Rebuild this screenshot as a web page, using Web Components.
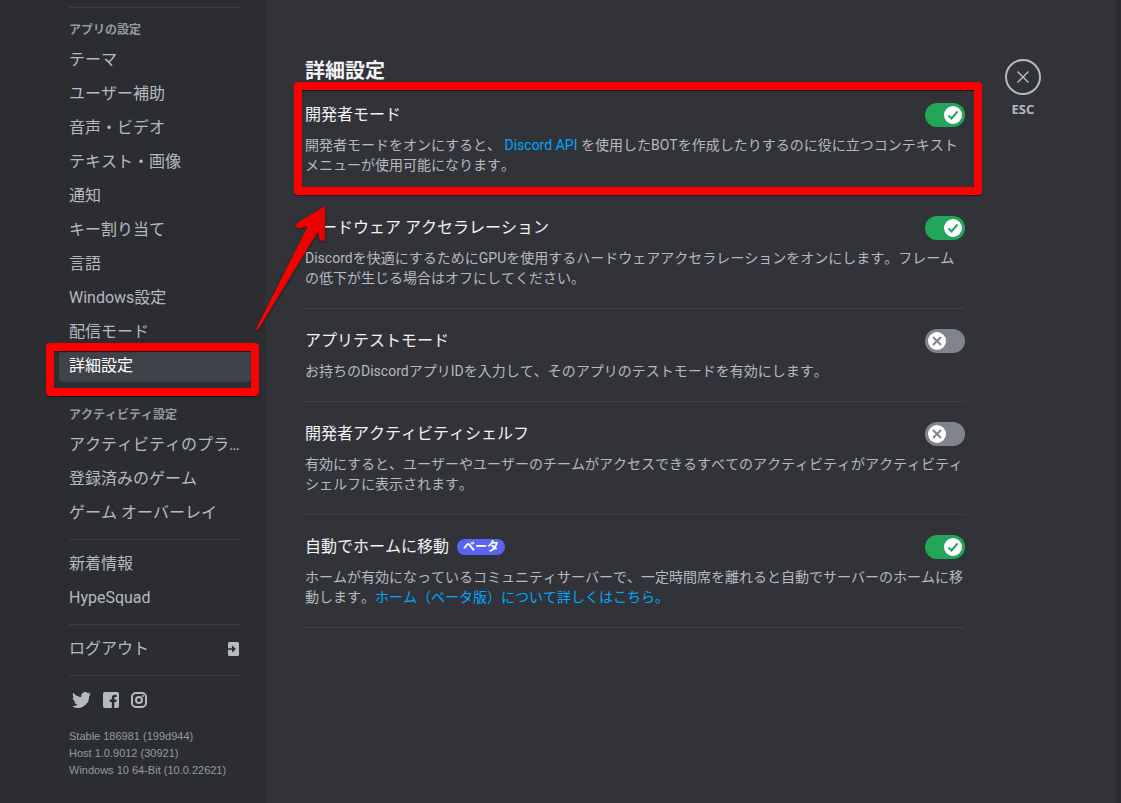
<!DOCTYPE html>
<html lang="ja">
<head>
<meta charset="utf-8">
<title>詳細設定</title>
<style>
  body { margin: 0; background: #313338; font-family: Roboto, "Noto Sans CJK JP", sans-serif; font-kerning: none; }
</style>
</head>
<body>
<settings-page></settings-page>

<script>
const define = (name, html, setup) => {
  const template = document.createElement('template');
  template.innerHTML = html;
  customElements.define(name, class extends HTMLElement {
    constructor() {
      super();
      this.attachShadow({ mode: 'open' }).append(template.content.cloneNode(true));
    }
    connectedCallback() { if (setup) setup(this, this.shadowRoot); }
  });
};

define('nav-heading', `
<style>
  :host { display: block; }
  h2 { margin: 0; padding: 6px 10px; font-size: 12px; line-height: 16px; font-weight: 700; color: #949ba4; }
</style>
<h2><slot></slot></h2>`);

define('nav-item', `
<style>
  :host { display: block; margin-bottom: 2px; }
  a { display: flex; align-items: center; justify-content: space-between; height: 32px; padding: 0 10px;
      border-radius: 4px; color: #b5bac1; font-size: 16px; line-height: 20px; font-weight: 400; text-decoration: none; }
  span { overflow: hidden; text-overflow: ellipsis; white-space: nowrap; }
  :host([selected]) a { background: #404249; color: #fff; }
</style>
<a href="#"><span><slot></slot></span><slot name="icon"></slot></a>`);

define('nav-separator', `
<style>
  :host { display: block; height: 1px; margin: 8px 10px; background: #3b3d44; }
</style>`);

define('social-links', `
<style>
  :host { display: flex; gap: 8px; padding: 4px 10px; margin-bottom: 12px; }
  a { display: flex; padding: 4px 2px; color: #b5bac1; }
  svg { display: block; width: 16px; height: 16px; }
  svg.wide { width: 20px; }
</style>
<a href="#" aria-label="Twitter"><svg class="wide" viewBox="-1 0 20 16" fill="currentColor"><path d="M19 1.900c-.7.3-1.500.5-2.200.6.8-.5 1.400-1.300 1.700-2.200-.8.5-1.600.8-2.500 1A3.950 3.950 0 0 0 9.300 5C6 4.800 3.200 3.200 1.300.7.300 2.600.8 4.900 2.500 6.100c-.7 0-1.300-.2-1.800-.5 0 2 1.300 3.700 3.200 4.100-.6.2-1.200.2-1.800.1.500 1.600 2 2.800 3.700 2.800A8 8 0 0 1 0 14.300 11.300 11.300 0 0 0 17.100 4c.8-.6 1.400-1.300 1.900-2.100z"/></svg></a>
<a href="#" aria-label="Facebook"><svg viewBox="0 0 16 16" fill="currentColor"><path d="M2 0h12a2 2 0 0 1 2 2v12a2 2 0 0 1-2 2h-2.700v-5.900h2l.3-2.500h-2.300V6.300c0-.8.300-1.200 1.200-1.200h1.200V2.900c-.3 0-.9-.1-1.700-.1-2 0-3.200 1.100-3.200 3.200v1.600h-2v2.500h2V16H2a2 2 0 0 1-2-2V2a2 2 0 0 1 2-2z"/></svg></a>
<a href="#" aria-label="Instagram"><svg viewBox="0 0 16 16" fill="none" stroke="currentColor" stroke-width="2"><rect x="1" y="1" width="14" height="14" rx="4"/><circle cx="8" cy="8" r="3"/><circle cx="12" cy="4" r="1" fill="currentColor" stroke="none"/></svg></a>`);

define('settings-sidebar', `
<style>
  :host { display: block; background: #2b2d31; box-sizing: border-box; padding: 7px 14px 20px 59px; }
  nav { display: flex; flex-direction: column; }
  .top { margin-top: 0; }
  .info { padding: 0 10px; font-family: "Liberation Sans", sans-serif; font-size: 11px; line-height: 17px; color: #949ba4; }
</style>
<nav>
  <nav-separator class="top"></nav-separator>
  <nav-heading>アプリの設定</nav-heading>
  <nav-item>テーマ</nav-item>
  <nav-item>ユーザー補助</nav-item>
  <nav-item>音声・ビデオ</nav-item>
  <nav-item>テキスト・画像</nav-item>
  <nav-item>通知</nav-item>
  <nav-item>キー割り当て</nav-item>
  <nav-item>言語</nav-item>
  <nav-item>Windows設定</nav-item>
  <nav-item>配信モード</nav-item>
  <nav-item selected>詳細設定</nav-item>
  <nav-separator></nav-separator>
  <nav-heading>アクティビティ設定</nav-heading>
  <nav-item>アクティビティのプライバシー</nav-item>
  <nav-item>登録済みのゲーム</nav-item>
  <nav-item>ゲーム オーバーレイ</nav-item>
  <nav-separator></nav-separator>
  <nav-item>新着情報</nav-item>
  <nav-item>HypeSquad</nav-item>
  <nav-separator></nav-separator>
  <nav-item>ログアウト<svg slot="icon" width="16" height="16" viewBox="0 0 16 16"><rect x="3" y="1" width="11" height="14" rx="1.500" fill="#b5bac1"/><path d="M3 7.200h4V4.500L11 8l-4 3.500V8.800H3z" fill="#2b2d31"/></svg></nav-item>
  <nav-separator></nav-separator>
</nav>
<social-links></social-links>
<div class="info">
  <div>Stable 186981 (199d944)</div>
  <div>Host 1.0.9012 (30921)</div>
  <div>Windows 10 64-Bit (10.0.22621)</div>
</div>`);

define('toggle-switch', `
<style>
  :host { display: block; flex: none; }
  label { display: grid; width: 40px; height: 24px; }
  input { grid-area: 1 / 1; appearance: none; margin: 0; width: 40px; height: 24px; border-radius: 12px; background: #80848e; }
  input:checked { background: #23a55a; }
  svg { grid-area: 1 / 1; align-self: center; margin-left: 3px; width: 18px; height: 18px; pointer-events: none; color: #80848e; }
  input:checked ~ svg { margin-left: 19px; color: #23a55a; }
  .on, input:checked ~ .off { display: none; }
  input:checked ~ .on { display: block; }
</style>
<label>
  <input type="checkbox" role="switch">
  <svg class="on" viewBox="0 0 18 18"><circle cx="9" cy="9" r="9" fill="#fff"/><path d="M4.500 9.500l3 3 6-7" fill="none" stroke="currentColor" stroke-width="2"/></svg>
  <svg class="off" viewBox="0 0 18 18"><circle cx="9" cy="9" r="9" fill="#fff"/><path d="M5 5l8 8M13 5l-8 8" fill="none" stroke="currentColor" stroke-width="2"/></svg>
</label>`);

define('setting-row', `
<style>
  :host { display: block; padding-bottom: 20px; margin-bottom: 20px; border-bottom: 1px solid #3f4147; }
  header { display: flex; justify-content: space-between; align-items: center; gap: 16px; height: 24px; margin-bottom: 8px; }
  h3 { display: flex; align-items: center; gap: 8px; margin: 0; font-size: 16px; line-height: 24px; font-weight: 400; color: #f2f3f5; }
  p { margin: 0; font-size: 14px; line-height: 20px; color: #b5bac1; }
</style>
<header><h3><slot name="title"></slot><slot name="badge"></slot></h3><toggle-switch></toggle-switch></header>
<p><slot></slot></p>`, (host, root) => {
  const input = root.querySelector('toggle-switch').shadowRoot.querySelector('input');
  input.checked = host.hasAttribute('checked');
  input.setAttribute('aria-label', host.querySelector('[slot=title]').textContent);
});

define('beta-badge', `
<style>
  :host { display: block; box-sizing: border-box; height: 16px; padding: 0 6px; border-radius: 8px; background: #5865f2;
          color: #fff; font-size: 12px; line-height: 16px; font-weight: 700; }
</style>
<slot></slot>`);

define('close-button', `
<style>
  :host { display: block; }
  button { display: flex; flex-direction: column; align-items: center; gap: 6px; width: 36px; padding: 0; border: 0; background: none;
           font: 700 13px/16px "Noto Sans", sans-serif; color: #b5bac1; }
  svg { display: block; }
</style>
<button type="button">
  <svg width="36" height="36" viewBox="0 0 36 36" fill="none" stroke="currentColor"><circle cx="18" cy="18" r="17" stroke-width="2"/><path d="M12.500 12.500l11 11M23.500 12.500l-11 11" stroke-width="1.500"/></svg>
  <span>ESC</span>
</button>`);

define('annotation-marks', `
<style>
  :host { position: absolute; inset: 0; pointer-events: none; }
  div { position: absolute; box-sizing: border-box; border: 8px solid #f00; border-radius: 4px; box-shadow: 0 1px 1px #0008, inset 0 1px 1px #000a; }
  .nav { left: 46px; top: 343px; width: 213px; height: 53px; }
  .row { left: 294px; top: 82px; width: 688px; height: 113px; }
  svg { position: absolute; left: 250px; top: 200px; filter: drop-shadow(0 1px 1px #0008); }
</style>
<div class="nav"></div>
<div class="row"></div>
<svg width="90" height="136" viewBox="250 200 90 136"><defs><linearGradient id="g" x1="0" x2="1" y1="0" y2="0.300"><stop offset=".4" stop-color="#f00"/><stop offset="1" stop-color="#e60000"/></linearGradient></defs><path d="M325 206L298 222.500Q295.500 224.500 296.500 227Q298 229 301 228L308 226L256 329Q257 330.500 258.500 329L318 231.500L319 238.500Q320 241 322.500 241Q325 240.500 325 238z" fill="url(#g)"/></svg>`);

define('settings-page', `
<style>
  :host { position: relative; display: grid; grid-template-columns: 265px minmax(0, 1fr) 5px; min-height: 100vh; overflow: hidden; background: #313338; }
  main { display: flex; align-items: flex-start; gap: 40px; padding: 59px 40px 20px; }
  section { flex: 1; max-width: 660px; min-width: 0; }
  h1 { margin: 0 0 20px; font-size: 20px; line-height: 24px; font-weight: 700; color: #f2f3f5; }
  a { color: #00a8fc; text-decoration: none; }
  .track { background: #2b2d31; }
</style>
<settings-sidebar></settings-sidebar>
<main>
  <section>
    <h1>詳細設定</h1>
    <setting-row checked><span slot="title">開発者モード</span>開発者モードをオンにすると、 <a href="#">Discord API</a> を使用したBOTを作成したりするのに役に立つコンテキストメニューが使用可能になります。</setting-row>
    <setting-row checked><span slot="title">ハードウェア アクセラレーション</span>Discordを快適にするためにGPUを使用するハードウェアアクセラレーションをオンにします。フレームの低下が生じる場合はオフにしてください。</setting-row>
    <setting-row><span slot="title">アプリテストモード</span>お持ちのDiscordアプリIDを入力して、そのアプリのテストモードを有効にします。</setting-row>
    <setting-row><span slot="title">開発者アクティビティシェルフ</span>有効にすると、ユーザーやユーザーのチームがアクセスできるすべてのアクティビティがアクティビティシェルフに表示されます。</setting-row>
    <setting-row checked><span slot="title">自動でホームに移動</span><beta-badge slot="badge">ベータ</beta-badge>ホームが有効になっているコミュニティサーバーで、一定時間席を離れると自動でサーバーのホームに移動します。<a href="#">ホーム（ベータ版）について詳しくはこちら。</a></setting-row>
  </section>
  <close-button></close-button>
</main>
<div class="track"></div>
<annotation-marks></annotation-marks>`);
</script>
</body>
</html>
